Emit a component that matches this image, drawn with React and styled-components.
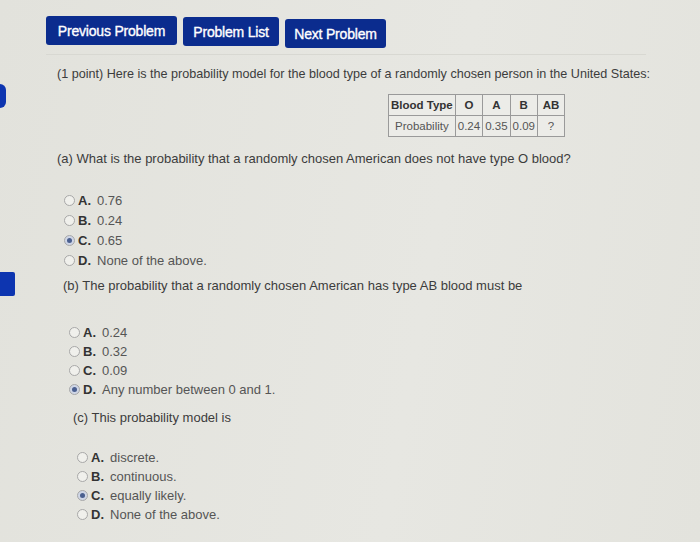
import React from "react";
import styled, { createGlobalStyle } from "styled-components";

const GlobalStyle = createGlobalStyle`
    html, body {
        margin: 0;
        padding: 0;
        background: #e4e4de;
    }
    body {
        font-family: "Liberation Sans", Arial, sans-serif;
        color: #3a3a3a;
    }
`;

const Page = styled.div`
    position: relative;
    width: 700px;
    height: 542px;
    overflow: hidden;
    background: linear-gradient(100deg, #e2e2dc 0%, #e7e7e2 60%, #e3e3dd 100%);
    padding: 16px 0 0 46px;
    box-sizing: border-box;
`;

const EdgeTab = styled.div`
    position: absolute;
    left: 0;
    top: ${(p) => p.top}px;
    width: ${(p) => p.w}px;
    height: ${(p) => p.h}px;
    background: #0d35b0;
    border-radius: ${(p) => p.radius};
`;

const Toolbar = styled.div`
    display: flex;
    gap: 6px;
    align-items: flex-start;
    padding-bottom: 6px;
    border-bottom: 1px solid #d8d8d2;
    width: 600px;
`;

const NavButton = styled.button`
    height: 29px;
    width: ${(p) => p.w}px;
    margin-top: ${(p) => p.drop}px;
    background: #0b2c8e;
    color: #ffffff;
    border: none;
    border-radius: 3px;
    font-family: "Liberation Sans", Arial, sans-serif;
    font-size: 14px;
    font-weight: normal;
    -webkit-text-stroke: 0.35px #ffffff;
    letter-spacing: -0.2px;
    padding: 0;
`;

const Intro = styled.p`
    margin: 12px 0 0 11px;
    font-size: 12.6px;
    color: #3c3c3c;
`;

const TableWrap = styled.div`
    display: flex;
    justify-content: flex-start;
    margin: 13px 0 0 342px;
`;

const ModelTable = styled.table`
    border-collapse: collapse;
    font-size: 11.5px;
    color: #444;
`;

const Cell = styled.td`
    border: 1px solid #9a9a9a;
    height: 20px;
    padding: 0 2px;
    min-width: 22px;
    text-align: center;
    font-weight: ${(p) => (p.head ? "bold" : "normal")};
    color: ${(p) => (p.head ? "#333" : "#555")};
    background: #ececE8;
`;

const Question = styled.p`
    margin: ${(p) => p.top}px 0 0 ${(p) => p.indent}px;
    font-size: 13px;
    color: #3c3c3c;
`;

const Options = styled.div`
    display: flex;
    flex-direction: column;
    gap: ${(p) => p.gap}px;
    margin: ${(p) => p.top}px 0 0 ${(p) => p.indent}px;
`;

const Option = styled.label`
    display: flex;
    align-items: center;
    gap: 3px;
    font-size: 13px;
    height: 14px;
    color: #555;
`;

const Radio = styled.span`
    width: 11px;
    height: 11px;
    border-radius: 50%;
    border: 1px solid #a8a8a8;
    background: ${(p) => (p.checked ? "#cfd6e6" : "#f0f0ec")};
    box-sizing: border-box;
    display: flex;
    align-items: center;
    justify-content: center;

    &::after {
        content: "";
        width: 5px;
        height: 5px;
        border-radius: 50%;
        background: #4a5f8f;
        display: ${(p) => (p.checked ? "block" : "none")};
    }
`;

const Letter = styled.b`
    color: #333;
    margin-right: 3px;
`;

function Choice({ letter, text, checked }) {
    return (
        <Option>
            <Radio checked={checked} />
            <Letter>{letter}.</Letter>
            {text}
        </Option>
    );
}

const parts = [
    {
        q: "(a) What is the probability that a randomly chosen American does not have type O blood?",
        qTop: 14, qIndent: 11, oTop: 27, oIndent: 18, gap: 6,
        choices: [["A", "0.76"], ["B", "0.24"], ["C", "0.65"], ["D", "None of the above."]],
        picked: 2,
    },
    {
        q: "(b) The probability that a randomly chosen American has type AB blood must be",
        qTop: 11, qIndent: 17, oTop: 32, oIndent: 23, gap: 5,
        choices: [["A", "0.24"], ["B", "0.32"], ["C", "0.09"], ["D", "Any number between 0 and 1."]],
        picked: 3,
    },
    {
        q: "(c) This probability model is",
        qTop: 14, qIndent: 27, oTop: 25, oIndent: 31, gap: 5,
        choices: [["A", "discrete."], ["B", "continuous."], ["C", "equally likely."], ["D", "None of the above."]],
        picked: 2,
    },
];

function App() {
    return (
        <>
            <GlobalStyle />
            <Page>
                <EdgeTab top={84} w={6} h={24} radius="0 6px 6px 0" />
                <EdgeTab top={272} w={15} h={24} radius="0 2px 2px 0" />

                <Toolbar>
                    <NavButton w={131} drop={0}>Previous Problem</NavButton>
                    <NavButton w={96} drop={1}>Problem List</NavButton>
                    <NavButton w={101} drop={3}>Next Problem</NavButton>
                </Toolbar>

                <Intro>
                    (1 point) Here is the probability model for the blood type of a randomly chosen person in the United States:
                </Intro>

                <TableWrap>
                    <ModelTable>
                        <tbody>
                            <tr>
                                <Cell head>Blood Type</Cell>
                                <Cell head>O</Cell>
                                <Cell head>A</Cell>
                                <Cell head>B</Cell>
                                <Cell head>AB</Cell>
                            </tr>
                            <tr>
                                <Cell>Probability</Cell>
                                <Cell>0.24</Cell>
                                <Cell>0.35</Cell>
                                <Cell>0.09</Cell>
                                <Cell>?</Cell>
                            </tr>
                        </tbody>
                    </ModelTable>
                </TableWrap>

                {parts.map((part, i) => (
                    <React.Fragment key={i}>
                        <Question top={part.qTop} indent={part.qIndent}>{part.q}</Question>
                        <Options top={part.oTop} indent={part.oIndent} gap={part.gap}>
                            {part.choices.map(([letter, text], j) => (
                                <Choice key={letter} letter={letter} text={text} checked={j === part.picked} />
                            ))}
                        </Options>
                    </React.Fragment>
                ))}
            </Page>
        </>
    );
}

export default App;
